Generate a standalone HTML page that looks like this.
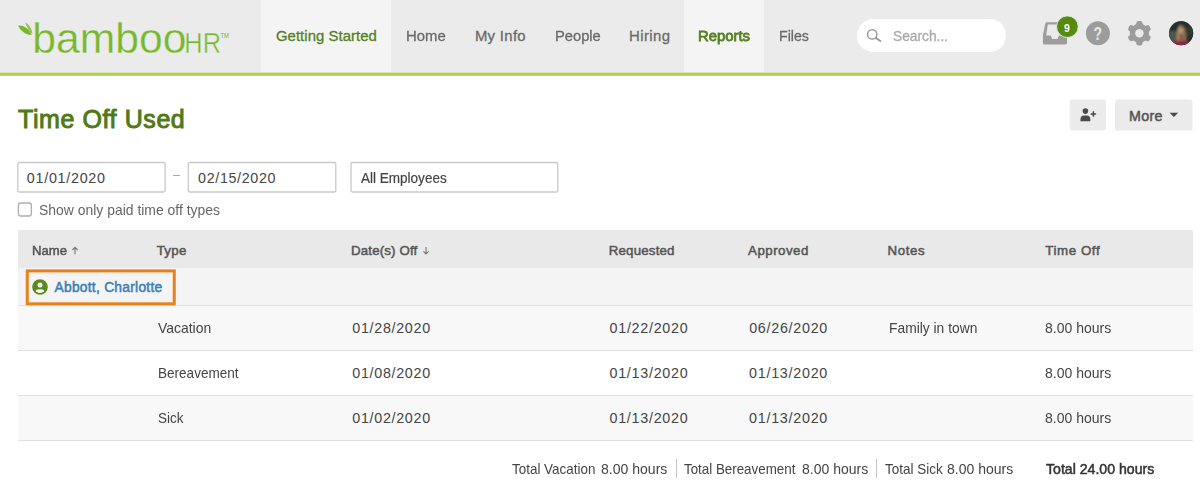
<!DOCTYPE html>
<html><head><meta charset="utf-8">
<style>
*{box-sizing:border-box;margin:0;padding:0}
html,body{width:1200px;height:491px;overflow:hidden;background:#fff}
body{font-family:"Liberation Sans",sans-serif;color:#444;position:relative}
.abs{position:absolute;white-space:nowrap}
.t{position:absolute;white-space:nowrap;transform-origin:0 0}
#hdr{position:absolute;left:0;top:0;width:1200px;height:72px;background:#ebebeb}
#hline{position:absolute;left:0;top:71.600px;width:1200px;height:4.800px;background:linear-gradient(to bottom,rgba(172,206,84,0) 0,#abce54 1px,#abce54 3.100px,rgba(172,206,84,0) 4.800px)}
.tab{position:absolute;top:0;height:72px;background:#f4f4f4}
#search{position:absolute;left:857px;top:18.500px;width:148.500px;height:33.500px;border-radius:17px;background:#fff}
.btn{position:absolute;top:99.500px;height:31px;background:#ebebeb;border-radius:2px}
.inp{position:absolute;top:162px;height:30.500px;border:1px solid #ccc;background:#fff}
#thead{position:absolute;left:17.500px;top:229.500px;width:1175px;height:38.500px;background:#e9e9e9}
.row{position:absolute;left:17.500px;width:1175px}
.hl{position:absolute;left:17.500px;width:1175px;height:1px;background:#e0e0e0}
.sep{position:absolute;top:459px;width:1px;height:18.500px;background:#c4c4c4}
</style></head><body>
<div id="hdr"></div>
<div class="tab" style="left:261px;width:129.500px"></div>
<div class="tab" style="left:684px;width:80px"></div>
<div id="hline"></div>

<!-- logo -->
<svg class="abs" style="left:0;top:0" width="240" height="72" viewBox="0 0 240 72">
  <g fill="#77b82a" stroke-linejoin="round">
  <path d="M18 25.500 C22.500 25 28.500 27.500 31.800 34.800 C26 35 21 31.500 18 25.500Z"/>
  <path d="M25.300 22.300 C28.500 24 32 28.500 32.400 34 C29 31.500 26.500 27 25.300 22.300Z" opacity="0.750"/>
  <text x="32.200" y="53" font-family="Liberation Sans, sans-serif" font-size="42" textLength="154.200" lengthAdjust="spacingAndGlyphs" stroke="#ebebeb" stroke-width="0.35">bamboo</text>
  <text x="184.300" y="53" font-family="Liberation Sans, sans-serif" font-size="29.600" textLength="36.700" lengthAdjust="spacingAndGlyphs" stroke="#ebebeb" stroke-width="0.5">HR</text>
  <text x="220.500" y="37.500" font-family="Liberation Sans, sans-serif" font-size="7" textLength="8.500" lengthAdjust="spacingAndGlyphs">TM</text>
  </g>
</svg>

<div id="search"></div>
<svg class="abs" style="left:864px;top:27px" width="20" height="18" viewBox="0 0 20 18"><circle cx="8.200" cy="7.400" r="4.650" fill="none" stroke="#9a9a9a" stroke-width="1.500"/><path d="M11.700 10.900 L16.400 14" stroke="#9a9a9a" stroke-width="1.900" stroke-linecap="round"/></svg>

<!-- inbox -->
<svg class="abs" style="left:1040px;top:14px" width="42" height="36" viewBox="0 0 42 36">
  <path d="M6.800 8.200 H23 a1.600 1.600 0 0 1 1.600 1.300 L27 21.500 V29 a1.500 1.500 0 0 1 -1.500 1.500 H4.400 a1.500 1.500 0 0 1 -1.500 -1.500 V21.500 L5.300 9.500 a1.600 1.600 0 0 1 1.500 -1.300 z" fill="#9c9c9c"/>
  <path d="M7.800 10.600 H22.100 L23.700 21.600 H18.900 L17.400 24.900 H12.200 L10.700 21.600 H6.200 Z" fill="#ebebeb"/>
  <circle cx="27.400" cy="12.700" r="10.800" fill="#568a10" stroke="#eef1e8" stroke-width="0.800"/>
  <text x="27" y="17.900" text-anchor="middle" font-family="Liberation Sans, sans-serif" font-size="10.500" font-weight="bold" fill="#fff">9</text>
</svg>
<!-- help -->
<svg class="abs" style="left:1085px;top:20px" width="26" height="26" viewBox="0 0 26 26"><circle cx="12.900" cy="13.200" r="12" fill="#9c9c9c"/><text transform="translate(12.700 20.100) scale(0.800 1)" text-anchor="middle" font-family="Liberation Sans, sans-serif" font-size="17.500" font-weight="bold" fill="#e8e8e8">?</text></svg>
<!-- gear -->
<svg class="abs" style="left:1126px;top:20px" width="27" height="27" viewBox="0 0 27 27"><g transform="translate(13.400 13.200)"><g fill="#9c9c9c"><circle r="9.600"/><rect x="-3.100" y="-12.200" width="6.200" height="24.400" rx="2.200"/><rect x="-3.100" y="-12.200" width="6.200" height="24.400" rx="2.200" transform="rotate(60)"/><rect x="-3.100" y="-12.200" width="6.200" height="24.400" rx="2.200" transform="rotate(120)"/></g><circle r="4.200" fill="#ebebeb"/></g></svg>
<!-- avatar -->
<svg class="abs" style="left:1168px;top:20px" width="26" height="27" viewBox="0 0 26 27"><defs><clipPath id="av"><circle cx="13.100" cy="13.200" r="12.100"/></clipPath><filter id="bl" x="-20%" y="-20%" width="140%" height="140%"><feGaussianBlur stdDeviation="1"/></filter></defs><g clip-path="url(#av)"><rect width="26" height="27" fill="#262e2a"/><g filter="url(#bl)"><rect x="0" y="11" width="8" height="11" fill="#48584c"/><rect x="19" y="6" width="7" height="10" fill="#2c3a34"/><path d="M8 25 C7 15 8.500 4.500 13 4.500 C18 4.500 19.500 15 18.500 25Z" fill="#7c6244"/><path d="M11.300 5.500 C9.300 9 9.200 16 9.500 21 L11 21 C10.600 15 11 9 12.300 5.500Z" fill="#b49466"/><path d="M15.500 7 C16.800 11 17 16 16.600 21 L15.300 21 C15.700 16 15.500 11 14.800 7.500Z" fill="#9c7c54"/><ellipse cx="12.800" cy="10.800" rx="2.300" ry="3.300" fill="#b89280"/><path d="M2 28 C3 20.500 8 19 12.500 21.500 C17 19 22 20 24.500 28Z" fill="#8e2848"/></g></g></svg>

<svg class="abs" style="left:1060px;top:95px" width="140" height="40" viewBox="1060 95 140 40"><g fill="#ebebeb"><rect x="1069.700" y="99.400" width="36.300" height="31.200" rx="2.500"/><rect x="1115" y="99.400" width="77.500" height="31.200" rx="2.500"/></g></svg>
<svg class="abs" style="left:1079px;top:107px" width="19" height="16" viewBox="0 0 19 16"><g fill="#4a4a4a"><circle cx="6.400" cy="4.100" r="2.800"/><path d="M1.500 14.300 v-2.300 a3.600 3.600 0 0 1 3.600 -3.600 h2.600 a3.600 3.600 0 0 1 3.600 3.600 v2.300 z"/><path d="M13.600 4.300 h1.500 v2 h2 v1.500 h-2 v2 h-1.500 v-2 h-2 v-1.500 h2 z"/></g></svg>

<svg class="abs" style="left:1169px;top:112px" width="10" height="6" viewBox="0 0 10 6"><path d="M0.600 0.700 h8.600 l-4.300 4.400z" fill="#4a4a4a"/></svg>


<div class="abs" style="left:172.500px;top:174.500px;width:7px;height:1px;background:#aaa"></div>

<svg class="abs" style="left:0;top:150px" width="600" height="80" viewBox="0 150 600 80"><g fill="#fff" stroke="#c9c9c9" stroke-width="1.300"><rect x="17.800" y="162.500" width="147.300" height="29.500" rx="1.500"/><rect x="188.300" y="162.500" width="147.500" height="29.500" rx="1.500"/><rect x="351" y="162.500" width="206.800" height="29.500" rx="1.500"/><rect x="18.400" y="203" width="13" height="13" rx="2.500" stroke="#adadad"/></g></svg>



<div id="thead"></div>
<div class="row" style="top:268px;height:37px;background:#f4f4f4"></div>
<div class="row" style="top:305px;height:45px;background:#f8f8f8"></div>
<div class="row" style="top:395px;height:45px;background:#f8f8f8"></div>
<div class="hl" style="top:304.800px"></div>
<div class="hl" style="top:349.800px"></div>
<div class="hl" style="top:394.800px"></div>
<div class="hl" style="top:439.800px"></div>

<!-- sort arrows -->
<svg class="abs" style="left:71px;top:245px" width="8" height="10" viewBox="0 0 8 10"><path d="M4 9.200 V2.600 M1.400 5 L4 2.400 L6.600 5" fill="none" stroke="#777" stroke-width="1.100"/></svg>
<svg class="abs" style="left:421.500px;top:245px" width="8" height="10" viewBox="0 0 8 10"><path d="M4 2 V8.800 M1.400 6.400 L4 9 L6.600 6.400" fill="none" stroke="#777" stroke-width="1.100"/></svg>

<svg class="abs" style="left:20px;top:265px" width="160" height="45" viewBox="0 0 160 45"><rect x="7.250" y="5.900" width="147" height="32.900" fill="none" stroke="#e8811c" stroke-width="3"/></svg>
<svg class="abs" style="left:32.100px;top:278.600px" width="16" height="16" viewBox="0 0 16 16"><defs><clipPath id="uc"><circle cx="8" cy="8" r="5.900"/></clipPath></defs><circle cx="8" cy="8" r="7.800" fill="#5a8a1e"/><g clip-path="url(#uc)" fill="#f4f4f4"><circle cx="8" cy="6" r="2.500"/><path d="M2.800 15 C2.800 11 5 10.200 8 10.200 C11 10.200 13.200 11 13.200 15Z"/></g></svg>

<div class="sep" style="left:675.500px"></div>
<div class="sep" style="left:876px"></div>

<div class="t" style="top:28.69px;font-size:14.9px;line-height:14.9px;color:#55801f;left:275.95px;letter-spacing:0.058px;-webkit-text-stroke:0.3px currentColor;">Getting Started</div>
<div class="t" style="top:28.69px;font-size:14.9px;line-height:14.9px;color:#6a6a6a;left:405.88px;transform:scaleX(0.9994);-webkit-text-stroke:0.3px currentColor;">Home</div>
<div class="t" style="top:28.69px;font-size:14.9px;line-height:14.9px;color:#6a6a6a;left:474.88px;letter-spacing:0.322px;-webkit-text-stroke:0.3px currentColor;">My Info</div>
<div class="t" style="top:28.69px;font-size:14.9px;line-height:14.9px;color:#6a6a6a;left:554.66px;transform:scaleX(0.9866);-webkit-text-stroke:0.3px currentColor;">People</div>
<div class="t" style="top:28.69px;font-size:14.9px;line-height:14.9px;color:#6a6a6a;left:629.11px;letter-spacing:0.395px;-webkit-text-stroke:0.3px currentColor;">Hiring</div>
<div class="t" style="top:28.69px;font-size:14.9px;line-height:14.9px;color:#55801f;left:698.03px;transform:scaleX(0.9982);-webkit-text-stroke:0.8px currentColor;">Reports</div>
<div class="t" style="top:28.69px;font-size:14.9px;line-height:14.9px;color:#6a6a6a;left:778.66px;transform:scaleX(0.9528);-webkit-text-stroke:0.3px currentColor;">Files</div>
<div class="t" style="top:28.89px;font-size:14.9px;line-height:14.9px;color:#aaaaaa;left:892.97px;transform:scaleX(0.9235);-webkit-text-stroke:0.3px currentColor;">Search...</div>
<div class="t" style="top:107.24px;font-size:25px;line-height:25px;color:#4f7a14;left:18.01px;letter-spacing:0.584px;-webkit-text-stroke:0.95px currentColor;">Time Off Used</div>
<div class="t" style="top:108.50px;font-size:14.3px;line-height:14.3px;color:#555;left:1128.99px;letter-spacing:0.283px;-webkit-text-stroke:0.5px currentColor;">More</div>
<div class="t" style="top:171.40px;font-size:14.3px;line-height:14.3px;color:#444;left:26.80px;letter-spacing:0.736px;">01/01/2020</div>
<div class="t" style="top:171.40px;font-size:14.3px;line-height:14.3px;color:#444;left:198.07px;letter-spacing:0.651px;">02/15/2020</div>
<div class="t" style="top:171.40px;font-size:14.3px;line-height:14.3px;color:#444;left:360.50px;transform:scaleX(0.9460);-webkit-text-stroke:0.2px currentColor;">All Employees</div>
<div class="t" style="top:203.00px;font-size:14.3px;line-height:14.3px;color:#666;left:39.08px;transform:scaleX(0.9747);">Show only paid time off types</div>
<div class="t" style="top:243.74px;font-size:13.3px;line-height:13.3px;color:#555;left:32.30px;transform:scaleX(0.9893);-webkit-text-stroke:0.5px currentColor;">Name</div>
<div class="t" style="top:243.74px;font-size:13.3px;line-height:13.3px;color:#555;left:156.69px;letter-spacing:0.257px;-webkit-text-stroke:0.5px currentColor;">Type</div>
<div class="t" style="top:243.74px;font-size:13.3px;line-height:13.3px;color:#555;left:351.03px;letter-spacing:0.141px;-webkit-text-stroke:0.5px currentColor;">Date(s) Off</div>
<div class="t" style="top:243.74px;font-size:13.3px;line-height:13.3px;color:#555;left:608.78px;letter-spacing:0.173px;-webkit-text-stroke:0.5px currentColor;">Requested</div>
<div class="t" style="top:243.74px;font-size:13.3px;line-height:13.3px;color:#555;left:748.04px;letter-spacing:0.480px;-webkit-text-stroke:0.5px currentColor;">Approved</div>
<div class="t" style="top:243.74px;font-size:13.3px;line-height:13.3px;color:#555;left:887.48px;letter-spacing:0.624px;-webkit-text-stroke:0.5px currentColor;">Notes</div>
<div class="t" style="top:243.74px;font-size:13.3px;line-height:13.3px;color:#555;left:1045.18px;letter-spacing:0.600px;-webkit-text-stroke:0.5px currentColor;">Time Off</div>
<div class="t" style="top:281.22px;font-size:13.8px;line-height:13.8px;color:#3a7fb5;left:54.53px;letter-spacing:0.260px;-webkit-text-stroke:0.5px currentColor;">Abbott, Charlotte</div>
<div class="t" style="top:320.70px;font-size:14.3px;line-height:14.3px;color:#444;left:158.22px;transform:scaleX(0.9741);">Vacation</div>
<div class="t" style="top:320.70px;font-size:14.3px;line-height:14.3px;color:#444;left:352.32px;letter-spacing:0.690px;">01/28/2020</div>
<div class="t" style="top:320.70px;font-size:14.3px;line-height:14.3px;color:#444;left:609.56px;letter-spacing:0.728px;">01/22/2020</div>
<div class="t" style="top:320.70px;font-size:14.3px;line-height:14.3px;color:#444;left:749.13px;letter-spacing:0.732px;">06/26/2020</div>
<div class="t" style="top:320.70px;font-size:14.3px;line-height:14.3px;color:#444;left:889.33px;transform:scaleX(0.9671);">Family in town</div>
<div class="t" style="top:320.70px;font-size:14.3px;line-height:14.3px;color:#444;left:1045.49px;transform:scaleX(0.9794);">8.00 hours</div>
<div class="t" style="top:365.70px;font-size:14.3px;line-height:14.3px;color:#444;left:158.15px;transform:scaleX(0.9473);">Bereavement</div>
<div class="t" style="top:365.70px;font-size:14.3px;line-height:14.3px;color:#444;left:352.30px;letter-spacing:0.692px;">01/08/2020</div>
<div class="t" style="top:365.70px;font-size:14.3px;line-height:14.3px;color:#444;left:609.50px;letter-spacing:0.736px;">01/13/2020</div>
<div class="t" style="top:365.70px;font-size:14.3px;line-height:14.3px;color:#444;left:749.10px;letter-spacing:0.736px;">01/13/2020</div>
<div class="t" style="top:365.70px;font-size:14.3px;line-height:14.3px;color:#444;left:1045.49px;transform:scaleX(0.9794);">8.00 hours</div>
<div class="t" style="top:410.60px;font-size:14.3px;line-height:14.3px;color:#444;left:158.12px;transform:scaleX(0.9411);">Sick</div>
<div class="t" style="top:410.60px;font-size:14.3px;line-height:14.3px;color:#444;left:352.32px;letter-spacing:0.690px;">01/02/2020</div>
<div class="t" style="top:410.60px;font-size:14.3px;line-height:14.3px;color:#444;left:609.50px;letter-spacing:0.736px;">01/13/2020</div>
<div class="t" style="top:410.60px;font-size:14.3px;line-height:14.3px;color:#444;left:749.10px;letter-spacing:0.736px;">01/13/2020</div>
<div class="t" style="top:410.60px;font-size:14.3px;line-height:14.3px;color:#444;left:1045.49px;transform:scaleX(0.9794);">8.00 hours</div>
<div class="t" style="top:462.30px;font-size:14.3px;line-height:14.3px;color:#444;left:511.79px;transform:scaleX(0.9391);">Total Vacation</div>
<div class="t" style="top:462.30px;font-size:14.3px;line-height:14.3px;color:#444;left:600.59px;transform:scaleX(0.9825);">8.00 hours</div>
<div class="t" style="top:462.30px;font-size:14.3px;line-height:14.3px;color:#444;left:684.29px;transform:scaleX(0.9340);">Total Bereavement</div>
<div class="t" style="top:462.30px;font-size:14.3px;line-height:14.3px;color:#444;left:802.19px;transform:scaleX(0.9809);">8.00 hours</div>
<div class="t" style="top:462.30px;font-size:14.3px;line-height:14.3px;color:#444;left:885.49px;transform:scaleX(0.9436);">Total Sick</div>
<div class="t" style="top:462.30px;font-size:14.3px;line-height:14.3px;color:#444;left:946.99px;transform:scaleX(0.9809);">8.00 hours</div>
<div class="t" style="top:462.30px;font-size:14.3px;line-height:14.3px;color:#333;left:1045.50px;transform:scaleX(0.9873);-webkit-text-stroke:0.5px currentColor;">Total 24.00 hours</div>
</body></html>
